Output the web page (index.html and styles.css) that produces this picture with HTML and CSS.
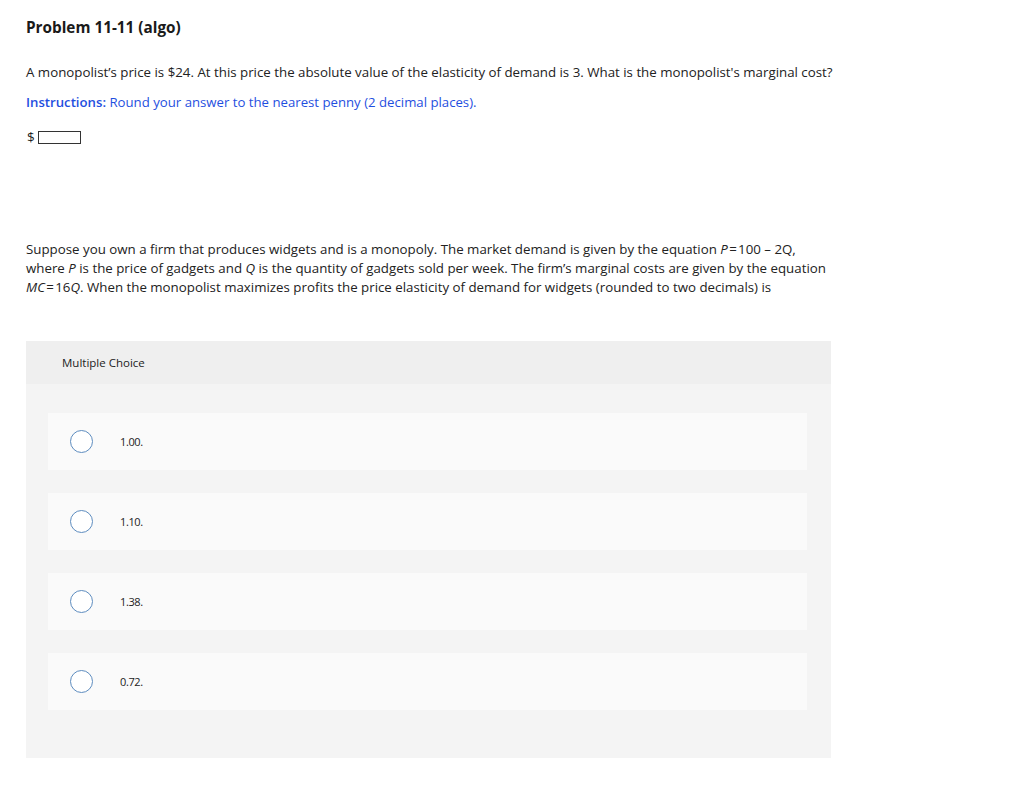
FILE: index.html
```html
<!DOCTYPE html>
<html>
<head>
<meta charset="utf-8">
<link rel="stylesheet" href="styles.css">
</head>
<body>
<div class="page">
  <h1 class="title">Problem 11-11 (algo)</h1>
  <p class="q1">A monopolist’s price is $24. At this price the absolute value of the elasticity of demand is 3. What is the monopolist's marginal cost?</p>
  <p class="instr"><b>Instructions:</b> Round your answer to the nearest penny (2 decimal places).</p>
  <div class="answer"><span class="dollar">$</span><span class="box"></span></div>

  <p class="q2">Suppose you own a firm that produces widgets and is a monopoly. The market demand is given by the equation <i>P</i>&#8202;=&#8202;100 – 2Q,<br>where <i>P</i> is the price of gadgets and <i>Q</i> is the quantity of gadgets sold per week. The firm’s marginal costs are given by the equation<br><i>MC</i>&#8202;=&#8202;16<i>Q</i>. When the monopolist maximizes profits the price elasticity of demand for widgets (rounded to two decimals) is</p>

  <div class="mc">
    <div class="mc-head">Multiple Choice</div>
    <div class="mc-body">
      <div class="opt"><span class="radio"></span><span class="opt-text">1.00.</span></div>
      <div class="opt"><span class="radio"></span><span class="opt-text">1.10.</span></div>
      <div class="opt"><span class="radio"></span><span class="opt-text">1.38.</span></div>
      <div class="opt"><span class="radio"></span><span class="opt-text">0.72.</span></div>
    </div>
  </div>
</div>
</body>
</html>
```
FILE: styles.css
```css
html, body {
  margin: 0;
  padding: 0;
  background: #ffffff;
}
body {
  font-family: "Open Sans", "Liberation Sans", sans-serif;
  color: #222;
}
.page {
  padding: 15px 0 0 26px;
  width: 806px;
}
.title {
  margin: 0;
  font-size: 15.3px;
  font-weight: 700;
  line-height: 24px;
  color: #1a1a1a;
}
.q1 {
  margin: 24px 0 0 0;
  font-size: 13.3px;
  line-height: 18px;
  white-space: nowrap;
}
.instr {
  margin: 12px 0 0 0;
  font-size: 13.2px;
  line-height: 18px;
  color: #1f4fe0;
}
.instr b {
  font-weight: 600;
}
.answer {
  margin-top: 18px;
  display: flex;
  align-items: center;
  height: 16px;
  font-size: 13.5px;
}
.dollar {
  margin-left: 1px;
  width: 11px;
}
.box {
  width: 41px;
  height: 11px;
  border: 1px solid #333;
}
.q2 {
  margin: 95px 0 0 0;
  font-size: 13.3px;
  line-height: 19px;
  white-space: nowrap;
}
.mc {
  margin-top: 44px;
  width: 805px;
  background: #f4f4f4;
}
.mc-head {
  height: 43px;
  background: #efefef;
  display: flex;
  align-items: center;
  padding-left: 36px;
  font-size: 11.5px;
  color: #222;
}
.mc-body {
  padding: 29px 24px 48px 22px;
  display: flex;
  flex-direction: column;
  gap: 23px;
}
.opt {
  height: 57px;
  background: #fafafa;
  display: flex;
  align-items: center;
}
.radio {
  width: 23px;
  height: 23px;
  border: 1.5px solid #5d8cbf;
  border-radius: 50%;
  margin-left: 22px;
  box-sizing: border-box;
  background: #fff;
}
.opt-text {
  margin-left: 27px;
  font-size: 11px;
  letter-spacing: -0.4px;
  color: #222;
}
```
